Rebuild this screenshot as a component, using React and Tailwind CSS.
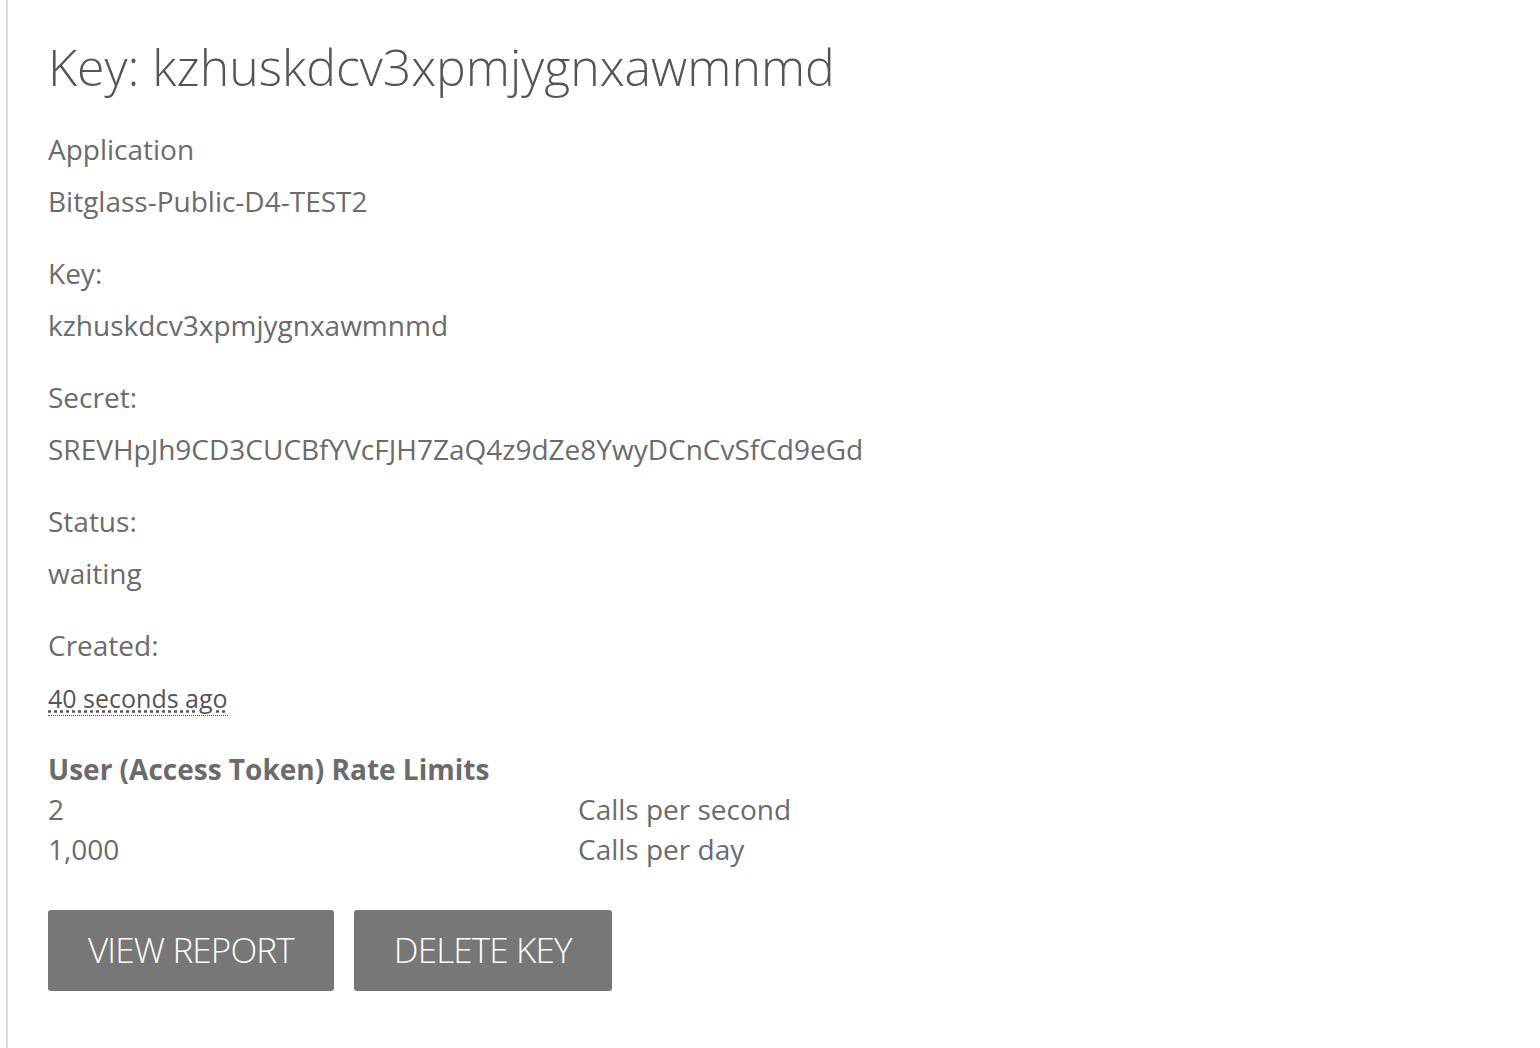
export default function App() {
  const fields = [
    ["Application", "Bitglass-Public-D4-TEST2"],
    ["Key:", "kzhuskdcv3xpmjygnxawmnmd"],
    ["Secret:", "SREVHpJh9CD3CUCBfYVcFJH7ZaQ4z9dZe8YwyDCnCvSfCd9eGd"],
    ["Status:", "waiting"],
  ];
  return (
    <div className="min-h-[1048px] w-[1540px] bg-white" style={{ fontFamily: '"Open Sans", sans-serif' }}>
      <div className="ml-[6px] min-h-[1048px] border-l-2 border-[#dddddd] pl-[40px] pt-[33px]">
        <h1 className="text-[50px] font-light leading-[68px] text-[#555555]">Key: kzhuskdcv3xpmjygnxawmnmd</h1>
        <div className="mt-[22px] text-[28px] text-[#6b6b6b]">
          {fields.map(([l, v]) => (
            <div key={l} className="mb-[20px]">
              <div className="leading-[52px]">{l}</div>
              <div className="leading-[52px]">{v}</div>
            </div>
          ))}
          <div>
            <div className="leading-[52px]">Created:</div>
            <div className="leading-[52px]">
              <abbr title="2024" className="border-b border-dotted border-[#555555] text-[25px] text-[#555555] underline decoration-dotted">40 seconds ago</abbr>
            </div>
          </div>
          <div className="mt-[25px] font-bold leading-[40px]">User (Access Token) Rate Limits</div>
          <div className="grid grid-cols-[530px_1fr] leading-[40px]">
            <div>2</div>
            <div>Calls per second</div>
            <div>1,000</div>
            <div>Calls per day</div>
          </div>
          <div className="mt-[41px] flex gap-[20px]">
            <button className="h-[81px] rounded-[3px] bg-[#777777] px-[40px] text-[35px] font-light font-stretch-[88%] tracking-[-0.85px] text-white">VIEW REPORT</button>
            <button className="h-[81px] rounded-[3px] bg-[#777777] px-[40px] text-[35px] font-light font-stretch-[88%] tracking-[-0.85px] text-white">DELETE KEY</button>
          </div>
        </div>
      </div>
    </div>
  );
}
